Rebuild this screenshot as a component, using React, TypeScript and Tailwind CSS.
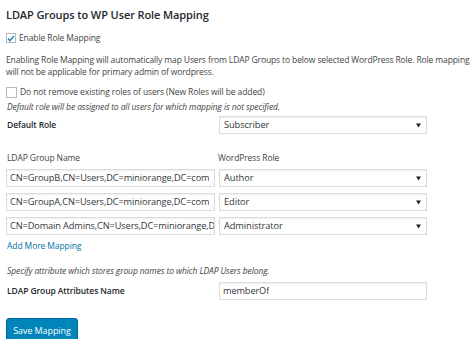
import React from "react";

const font = { fontFamily: '"Open Sans", "Noto Sans", sans-serif' };

function Arrow() {
  return (
    <svg width="5" height="5" viewBox="0 0 5 5" className="shrink-0">
      <path d="M0 0.5 L5 0.5 L2.5 4.5 Z" fill="#222" />
    </svg>
  );
}

function Select({ value }: { value: string }) {
  return (
    <div className="flex h-[18px] w-[208px] items-center justify-between border border-[#dcdcdc] bg-white pl-[4px] pr-[5px] text-[9.3px] text-[#32373c] shadow-[inset_0_1px_2px_rgba(0,0,0,0.07)]">
      <span>{value}</span>
      <Arrow />
    </div>
  );
}

function TextInput({ value, w }: { value: string; w: string }) {
  return (
    <div className={`flex h-[18px] ${w} shrink-0 items-center overflow-hidden whitespace-nowrap border border-[#dcdcdc] bg-white pl-[3px] text-[9.2px] text-[#32373c] shadow-[inset_0_1px_2px_rgba(0,0,0,0.07)]`}>
      <span className="min-w-0 overflow-hidden">{value}</span>
    </div>
  );
}

export default function App() {
  const rows = [
    ["CN=GroupB,CN=Users,DC=miniorange,DC=com", "Author"],
    ["CN=GroupA,CN=Users,DC=miniorange,DC=com", "Editor"],
    ["CN=Domain Admins,CN=Users,DC=miniorange,DC=com", "Administrator"],
  ];
  return (
    <div
      style={font}
      className="h-[339px] w-[474px] overflow-hidden bg-white pl-[6px] pt-[7px] text-[8.5px] leading-[12px] tracking-[-0.1px] text-[#444]"
    >
      <h1 className="text-[11px] font-semibold leading-[16px] tracking-[-0.1px] text-[#23282d]">
        LDAP Groups to WP User Role Mapping
      </h1>
      <div className="mt-[9px] flex h-[12px] items-center gap-[3px]">
        <span className="flex h-[10px] w-[10px] items-center justify-center border border-[#b4b9be] bg-white">
          <svg width="8" height="7" viewBox="0 0 8 7">
            <path d="M1 3.6 L3 5.6 L7 1" stroke="#1e8cbe" strokeWidth="1.5" fill="none" />
          </svg>
        </span>
        <span>Enable Role Mapping</span>
      </div>
      <p className="mt-[10px] tracking-[-0.12px]">
        Enabling Role Mapping will automatically map Users from LDAP Groups to below selected WordPress Role. Role mapping will not be applicable for primary admin of wordpress.
      </p>
      <div className="mt-[8px] flex h-[12px] items-center gap-[3px]">
        <span className="h-[11px] w-[11px] border border-[#b4b9be] bg-white" />
        <span>Do not remove existing roles of users (New Roles will be added)</span>
      </div>
      <p className="mt-[3px] pl-[1px] italic">
        Default role will be assigned to all users for which mapping is not specified.
      </p>
      <div className="mt-[3px] flex items-center">
        <span className="w-[213px] pl-[1px] font-semibold text-[#23282d]">Default Role</span>
        <Select value="Subscriber" />
      </div>
      <div className="mt-[18px] flex">
        <span className="w-[212px] pl-[1px]">LDAP Group Name</span>
        <span>WordPress Role</span>
      </div>
      <div className="mt-[5px] flex flex-col gap-[6px]">
        {rows.map(([g, r]) => (
          <div key={g} className="flex items-center gap-[4px]">
            <TextInput value={g} w="w-[209px]" />
            <Select value={r} />
          </div>
        ))}
      </div>
      <div className="mt-[5px] pl-[1px] text-[#0073aa]">Add More Mapping</div>
      <p className="mt-[13px] pl-[1px] italic">
        Specify attribute which stores group names to which LDAP Users belong.
      </p>
      <div className="mt-[5px] flex items-center">
        <span className="w-[213px] pl-[1px] font-semibold text-[#23282d]">LDAP Group Attributes Name</span>
        <TextInput value="memberOf" w="w-[208px]" />
      </div>
      <button className="mt-[18px] h-[26px] w-[72px] rounded-[3px] border border-[#006799] bg-[#0085ba] text-[9px] text-white shadow-[0_1px_0_#006799]">
        Save Mapping
      </button>
    </div>
  );
}
